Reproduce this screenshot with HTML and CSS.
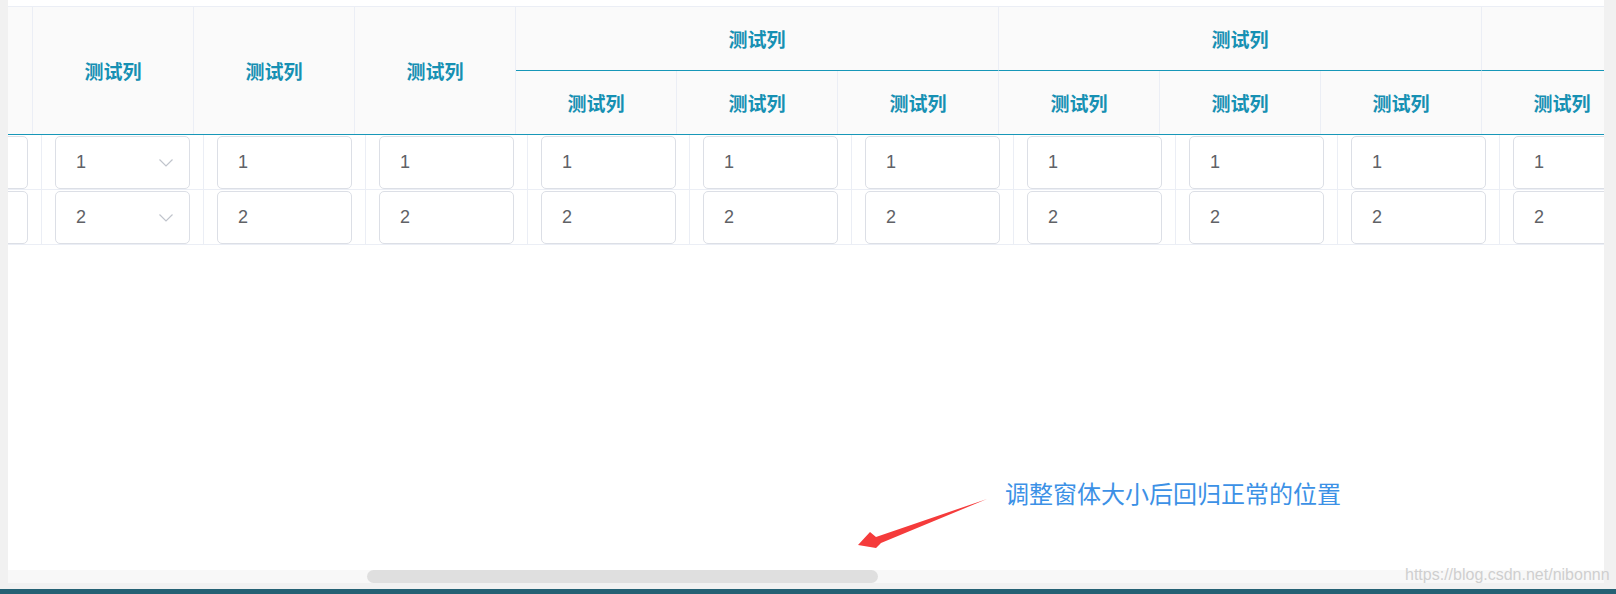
FILE: index.html
```html
<!DOCTYPE html>
<html lang="zh">
<head>
  <meta charset="UTF-8">
  <title>表格固定列错位</title>
  <link rel="stylesheet" href="styles.css">
</head>
<body>
  <div class="page">
    <div class="panel">
      <div class="thead">
        <div class="th tall"></div>
        <div class="th tall">测试列</div>
        <div class="th tall">测试列</div>
        <div class="th tall">测试列</div>
        <div class="th group">测试列</div>
        <div class="th group">测试列</div>
        <div class="th group"></div>
        <div class="th">测试列</div>
        <div class="th">测试列</div>
        <div class="th">测试列</div>
        <div class="th">测试列</div>
        <div class="th">测试列</div>
        <div class="th">测试列</div>
        <div class="th">测试列</div>
        <div class="th"></div>
        <div class="th"></div>
      </div>

      <div class="tbody">
        <!-- row 1 -->
        <div class="td"><div class="field"></div></div>
        <div class="td">
          <div class="field select"><span>1</span>
            <svg class="arrow-down" width="14" height="8" viewBox="0 0 14 8"><path d="M0.5 0.5 L7 7 L13.5 0.5" fill="none" stroke="#c0c4cc" stroke-width="1.2"/></svg>
          </div>
        </div>
        <div class="td"><div class="field"><span>1</span></div></div>
        <div class="td"><div class="field"><span>1</span></div></div>
        <div class="td"><div class="field"><span>1</span></div></div>
        <div class="td"><div class="field"><span>1</span></div></div>
        <div class="td"><div class="field"><span>1</span></div></div>
        <div class="td"><div class="field"><span>1</span></div></div>
        <div class="td"><div class="field"><span>1</span></div></div>
        <div class="td"><div class="field"><span>1</span></div></div>
        <div class="td"><div class="field"><span>1</span></div></div>
        <!-- row 2 -->
        <div class="td"><div class="field"></div></div>
        <div class="td">
          <div class="field select"><span>2</span>
            <svg class="arrow-down" width="14" height="8" viewBox="0 0 14 8"><path d="M0.5 0.5 L7 7 L13.5 0.5" fill="none" stroke="#c0c4cc" stroke-width="1.2"/></svg>
          </div>
        </div>
        <div class="td"><div class="field"><span>2</span></div></div>
        <div class="td"><div class="field"><span>2</span></div></div>
        <div class="td"><div class="field"><span>2</span></div></div>
        <div class="td"><div class="field"><span>2</span></div></div>
        <div class="td"><div class="field"><span>2</span></div></div>
        <div class="td"><div class="field"><span>2</span></div></div>
        <div class="td"><div class="field"><span>2</span></div></div>
        <div class="td"><div class="field"><span>2</span></div></div>
        <div class="td"><div class="field"><span>2</span></div></div>
      </div>

      <div class="hscroll"><div class="thumb"></div></div>
    </div>
    <div class="taskbar"></div>

    <div class="note">调整窗体大小后回归正常的位置</div>
    <svg class="note-arrow" width="145" height="65" viewBox="850 490 145 65">
      <polygon points="987,499 876,537 870,532 858,545 876,548 881,543" fill="#f53b3b"/>
    </svg>
    <div class="watermark">https://blog.csdn.net/nibonnn</div>
  </div>
</body>
</html>
```

FILE: styles.css
```css
* {
  box-sizing: border-box;
}
body {
  margin: 0;
  background: #f1f1f1;
  font-family: "Liberation Sans", "Noto Sans CJK SC", sans-serif;
}
.page {
  position: relative;
  height: 594px;
  display: flex;
  flex-direction: column;
  overflow: hidden;
}
.panel {
  margin: 0 12px 0 8px;
  height: 583px;
  padding-top: 6px;
  background: #fff;
  display: flex;
  flex-direction: column;
  overflow: hidden;
}

/* header */
.thead {
  display: grid;
  grid-template-columns: 25px repeat(12, 161px);
  grid-template-rows: 64px 63px;
  width: max-content;
  background: #fafafa;
  border-top: 1px solid #ebeef5;
  border-bottom: 1px solid #1797b8;
}
.th {
  display: flex;
  align-items: center;
  justify-content: center;
  border-right: 1px solid #ebeef5;
  font-family: "Noto Sans CJK SC", sans-serif;
  font-weight: 700;
  font-size: 19px;
  color: #1690b3;
}
.th.tall {
  grid-row: span 2;
}
.th.group {
  grid-column: span 3;
  border-bottom: 1px solid #1797b8;
}

/* body */
.tbody {
  display: grid;
  grid-template-columns: 34px repeat(10, 162px);
  grid-auto-rows: 55px;
  width: max-content;
}
.td {
  display: flex;
  justify-content: flex-end;
  align-items: flex-start;
  padding: 1px 13px 0;
  border-right: 1px solid #ebeef5;
  border-bottom: 1px solid #ebeef5;
}
.field {
  flex: none;
  width: 135px;
  height: 53px;
  display: flex;
  align-items: center;
  justify-content: space-between;
  padding: 0 16px 0 20px;
  background: #fff;
  border: 1px solid #dcdfe6;
  border-radius: 5px;
  font-size: 18px;
  color: #606266;
}
.arrow-down {
  display: block;
}

/* scrollbar + taskbar */
.hscroll {
  margin-top: auto;
  height: 13px;
  padding-left: 359px;
  background: #f8f8f8;
}
.thumb {
  width: 511px;
  height: 13px;
  border-radius: 7px;
  background: #dfdfdf;
}
.taskbar {
  margin-top: 6px;
  height: 5px;
  background: #256174;
}

/* annotation layer */
.note {
  position: absolute;
  left: 1005px;
  top: 481px;
  font-family: "Noto Sans CJK SC", sans-serif;
  font-size: 24px;
  line-height: 24px;
  color: #3c91e6;
  white-space: nowrap;
}
.note-arrow {
  position: absolute;
  left: 850px;
  top: 490px;
}
.watermark {
  position: absolute;
  left: 1405px;
  top: 566px;
  font-size: 16px;
  line-height: 18px;
  color: #cfcfcf;
  white-space: nowrap;
}
```
